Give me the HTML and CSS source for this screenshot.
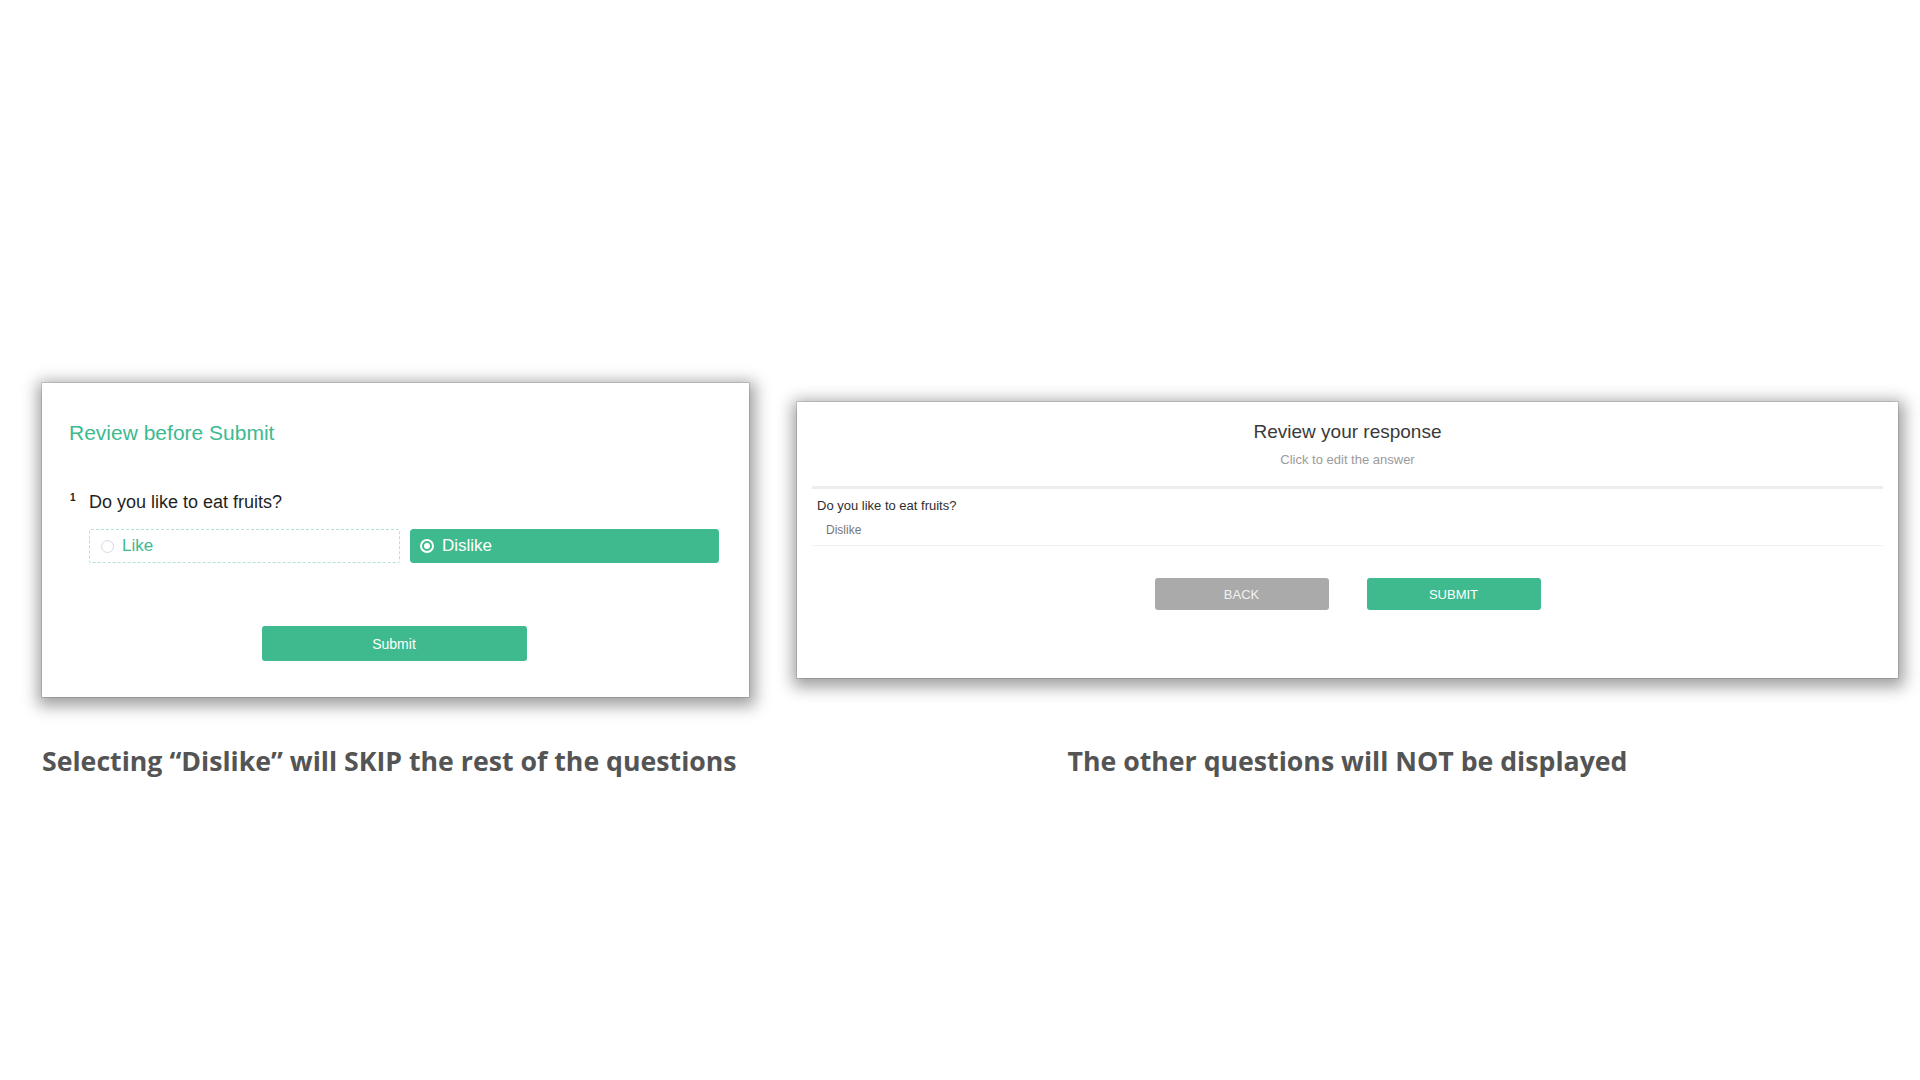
FILE: index.html
```html
<!DOCTYPE html>
<html lang="en">
<head>
<meta charset="utf-8">
<title>Skip logic review</title>
<link rel="stylesheet" href="styles.css">
</head>
<body>
<main class="stage">
  <section class="card card-form">
    <h1 class="form-title">Review before Submit</h1>
    <div class="question">
      <span class="q-num">1</span>
      <span class="q-text">Do you like to eat fruits?</span>
    </div>
    <div class="options">
      <div class="option">
        <span class="radio"></span>
        <span class="option-label">Like</span>
      </div>
      <div class="option option-selected">
        <span class="radio radio-on"></span>
        <span class="option-label">Dislike</span>
      </div>
    </div>
    <div class="form-actions">
      <button class="btn-submit">Submit</button>
    </div>
  </section>

  <section class="card card-review">
    <h2 class="review-title">Review your response</h2>
    <p class="review-sub">Click to edit the answer</p>
    <div class="review-divider"></div>
    <div class="review-item">
      <div class="review-q">Do you like to eat fruits?</div>
      <div class="review-a">Dislike</div>
    </div>
    <div class="review-actions">
      <button class="btn btn-back">BACK</button>
      <button class="btn btn-go">SUBMIT</button>
    </div>
  </section>

  <p class="caption caption-left">Selecting “Dislike” will SKIP the rest of the questions</p>
  <p class="caption caption-right">The other questions will NOT be displayed</p>
</main>
</body>
</html>
```

FILE: styles.css
```css
html, body {
  margin: 0;
  padding: 0;
  background: #ffffff;
}

body {
  width: 1920px;
  height: 1080px;
  overflow: hidden;
  font-family: "Liberation Sans", Arial, Helvetica, sans-serif;
}

.stage {
  display: grid;
  grid-template-columns: 707px 1101px;
  column-gap: 48px;
  row-gap: 48px;
  padding: 383px 0 0 42px;
  align-items: start;
}

.card {
  background: #ffffff;
  box-shadow: 0 0 0 1px rgba(0, 0, 0, 0.12), 1px 4px 15px 5px rgba(0, 0, 0, 0.38);
  box-sizing: border-box;
}

/* ---------- left card ---------- */
.card-form {
  padding: 38px 30px 36px 27px;
  height: 314px;
  display: flex;
  flex-direction: column;
}

.form-title {
  margin: 0;
  font-size: 21px;
  line-height: 24px;
  font-weight: normal;
  color: #3dba8f;
}

.question {
  display: flex;
  align-items: flex-start;
  margin-top: 46px;
  height: 22px;
}

.q-num {
  width: 20px;
  font-size: 10px;
  line-height: 14px;
  font-weight: bold;
  color: #222;
  padding-left: 1px;
  box-sizing: border-box;
}

.q-text {
  font-size: 18px;
  line-height: 22px;
  color: #1f1f1f;
}

.options {
  display: flex;
  gap: 10px;
  margin-top: 16px;
  margin-left: 20px;
}

.option {
  flex: 1;
  height: 34px;
  box-sizing: border-box;
  border: 1px dashed #b4e3d1;
  border-radius: 2px;
  display: flex;
  align-items: center;
  padding-left: 11px;
  gap: 8px;
}

.option-selected {
  background: #3eba8e;
  border: 1px solid #3eba8e;
  border-radius: 3px;
  padding-left: 9px;
}

.radio {
  width: 13px;
  height: 13px;
  border-radius: 50%;
  border: 1px solid #d6d6e6;
  box-sizing: border-box;
  flex: none;
}

.radio-on {
  width: 14px;
  height: 14px;
  border: 2px solid #ffffff;
  position: relative;
}

.radio-on::after {
  content: "";
  position: absolute;
  left: 2px;
  top: 2px;
  width: 6px;
  height: 6px;
  border-radius: 50%;
  background: #ffffff;
}

.option-label {
  font-size: 17px;
  line-height: 20px;
  color: #3dba8f;
}

.option-selected .option-label {
  color: #ffffff;
}

.form-actions {
  display: flex;
  justify-content: center;
  margin-top: 63px;
}

.btn-submit {
  width: 265px;
  height: 35px;
  border: none;
  border-radius: 3px;
  background: #3eba8e;
  color: #ffffff;
  font-family: "Liberation Sans", Arial, sans-serif;
  font-size: 14px;
  padding: 0;
}

/* ---------- right card ---------- */
.card-review {
  margin-top: 19px;
  height: 276px;
  padding: 19px 15px 0 15px;
  display: flex;
  flex-direction: column;
}

.review-title {
  margin: 0;
  text-align: center;
  font-size: 19px;
  line-height: 22px;
  font-weight: normal;
  color: #3a3a3a;
}

.review-sub {
  margin: 9px 0 0;
  text-align: center;
  font-size: 13px;
  line-height: 16px;
  color: #9b9b9b;
}

.review-divider {
  margin-top: 18px;
  height: 3px;
  background: #ededed;
}

.review-item {
  padding: 9px 0 7px;
  border-bottom: 1px solid #f1f1f1;
}

.review-q {
  padding-left: 5px;
  font-size: 13px;
  line-height: 16px;
  color: #2e2e2e;
}

.review-a {
  margin-top: 8px;
  padding-left: 14px;
  font-size: 12px;
  line-height: 16px;
  color: #777777;
}

.review-actions {
  display: flex;
  justify-content: center;
  gap: 38px;
  margin-top: 32px;
}

.btn {
  width: 174px;
  height: 32px;
  border: none;
  border-radius: 3px;
  font-family: "Liberation Sans", Arial, sans-serif;
  font-size: 13px;
  padding: 0;
  color: #ffffff;
}

.btn-back {
  background: #aaaaaa;
  color: #f2f2f2;
}

.btn-go {
  background: #3eba8e;
}

/* ---------- captions ---------- */
.caption {
  margin: 0;
  font-family: "Open Sans", "Noto Sans", sans-serif;
  font-weight: 700;
  font-size: 26.7px;
  line-height: 32px;
  color: #545454;
  white-space: nowrap;
}

.caption-left {
  text-align: left;
}

.caption-right {
  text-align: center;
}
```
